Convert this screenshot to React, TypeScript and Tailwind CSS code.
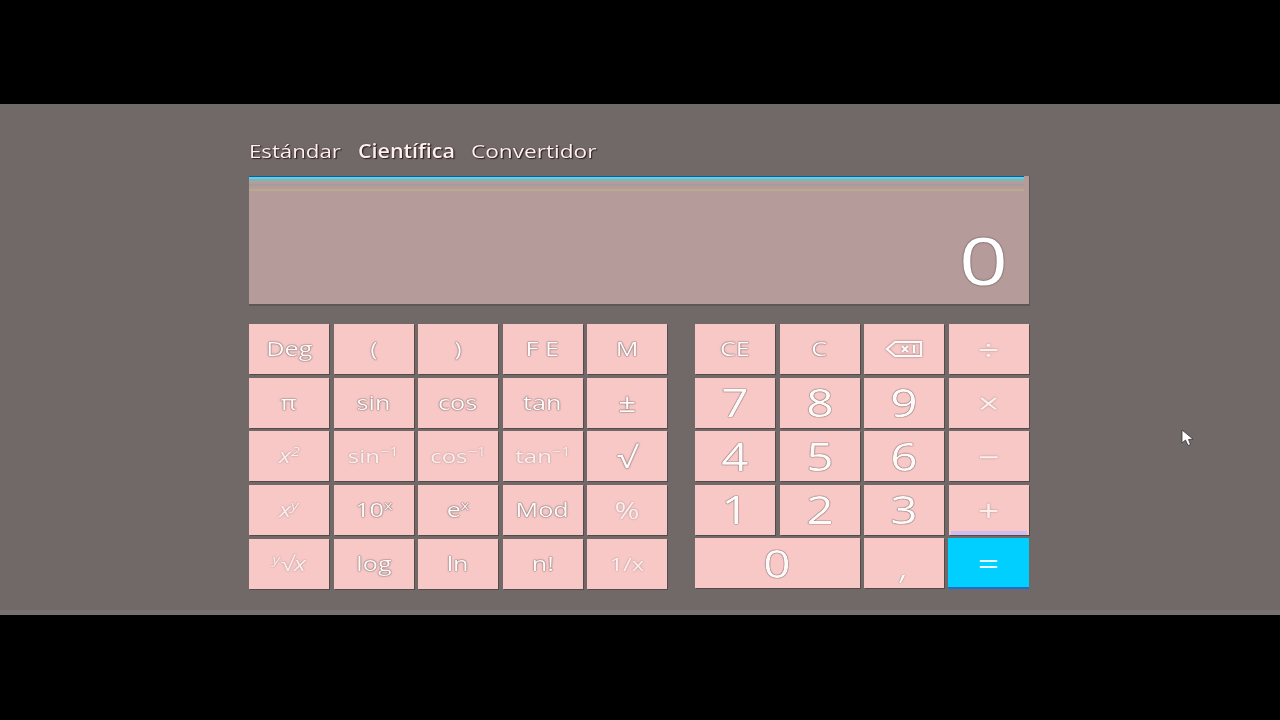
import React from "react";

const box =
  "flex items-center justify-center bg-[#f8c8c7] h-[50px] shadow-[1px_1px_0_#544a49] overflow-hidden";
const emboss = "text-[#fffaf8] font-medium [text-shadow:0_0_1px_#7a6464,0_0_1px_#7a6464,0_0_2px_#a08888]";
const faded = "text-[#fdeeec] font-medium [text-shadow:0_0_1px_#b89c9c,0_0_2px_#b89c9c]";
const digit = "text-[#fffaf8] text-[38px] font-medium [text-shadow:0_0_1px_#4f4040,0_0_1px_#4f4040]";

function Wide({ className, children }: { className?: string; children: React.ReactNode }) {
  return <span className={`inline-block scale-x-[1.26] whitespace-nowrap ${className ?? ""}`}>{children}</span>;
}

function Sup({ children }: { children: React.ReactNode }) {
  return <sup className="text-[13px] align-baseline relative -top-[7px]">{children}</sup>;
}

const left: { c: React.ReactNode; cls: string }[] = [
  { c: "Deg", cls: `${emboss} text-[20px]` },
  { c: "(", cls: `${emboss} text-[20px]` },
  { c: ")", cls: `${emboss} text-[20px]` },
  { c: "F E", cls: `${emboss} text-[20px]` },
  { c: "M", cls: `${emboss} text-[20px]` },
  { c: "π", cls: `${emboss} text-[20px]` },
  { c: "sin", cls: `${emboss} text-[20px]` },
  { c: "cos", cls: `${emboss} text-[20px]` },
  { c: "tan", cls: `${emboss} text-[20px]` },
  { c: "±", cls: `${emboss} text-[25px]` },
  { c: <span className="italic">x<Sup>2</Sup></span>, cls: `${faded} text-[20px]` },
  { c: <span>sin<Sup>−1</Sup></span>, cls: `${faded} text-[19px]` },
  { c: <span>cos<Sup>−1</Sup></span>, cls: `${faded} text-[19px]` },
  { c: <span>tan<Sup>−1</Sup></span>, cls: `${faded} text-[19px]` },
  { c: "√", cls: `${emboss} text-[30px]` },
  { c: <span className="italic">x<Sup>y</Sup></span>, cls: `${faded} text-[20px]` },
  { c: <span>10<Sup>x</Sup></span>, cls: `${emboss} text-[20px]` },
  { c: <span>e<Sup>x</Sup></span>, cls: `${emboss} text-[20px]` },
  { c: "Mod", cls: `${emboss} text-[20px]` },
  { c: "%", cls: `${faded} text-[24px]` },
  { c: <span className="italic"><Sup>y</Sup>√x</span>, cls: `${faded} text-[20px]` },
  { c: "log", cls: `${emboss} text-[20px]` },
  { c: "ln", cls: `${emboss} text-[20px]` },
  { c: "n!", cls: `${emboss} text-[20px]` },
  { c: "1/x", cls: `${faded} text-[19px]` },
];

function Backspace() {
  return (
    <svg width="38" height="18" viewBox="0 0 38 18" fill="none" stroke="#fffaf8" strokeWidth="2.2" style={{ filter: "drop-shadow(0 0 1px #8d7676)" }}>
      <path d="M10 2H36V16H10L2 9Z" />
      <path d="M17 6l6 6M23 6l-6 6M29 5v8" />
    </svg>
  );
}

export default function App() {
  return (
    <div className="flex flex-col w-[1280px] h-[720px] bg-black font-['Open_Sans','Noto_Sans',sans-serif] overflow-hidden">
      <div className="h-[104px] shrink-0 bg-black" />
      <div className="relative h-[511px] shrink-0 bg-[#716967] pl-[249px] pt-[35px] border-b-[5px] border-[#787170]">
        <div className="flex gap-[18px] h-[24px] items-center text-[19px] leading-[24px] text-[#fff0ee] [text-shadow:0_0_1px_#2f2222,1px_1px_1px_#2f2222]">
          <span className="block w-[91px] whitespace-nowrap origin-left scale-x-[1.17]">Estándar</span>
          <span className="block w-[95px] whitespace-nowrap origin-left scale-x-[1.13] font-semibold">Científica</span>
          <span className="block w-[125px] whitespace-nowrap origin-left scale-x-[1.19]">Convertidor</span>
        </div>
        <div className="mt-[13px] w-[781px] h-[130px] bg-[#b59c9b] border-b-2 border-r border-[#5f5755] flex flex-col justify-end items-end relative">
          <div className="absolute inset-x-0 top-0 flex flex-col pr-[5px]">
            <div className="h-[1px] bg-[#3a46a0]" />
            <div className="h-[2px] bg-[#33e5f2]" />
            <div className="h-[1px]" />
            <div className="h-[2px] bg-[#8fb0a6]" />
            <div className="h-[2px]" />
            <div className="h-[2px] bg-[#a89a9e]" />
            <div className="h-[3px]" />
            <div className="h-[2px] bg-[#b8ab8c]" />
          </div>
          <span className="inline-block scale-x-[1.3] text-[66px] leading-[88px] text-white pr-[23px] pb-[1px] [text-shadow:0_0_1.5px_#2f2525]">0</span>
        </div>
        <div className="mt-[18px] flex w-[780px] justify-between">
          <div className="grid grid-cols-[repeat(5,80px)] gap-x-[4.5px] gap-y-[3.5px] w-[419px]">
            {left.map((k, i) => (
              <div key={i} className={`${box} ${k.cls}`}><Wide>{k.c}</Wide></div>
            ))}
          </div>
          <div className="grid grid-cols-[repeat(4,80px)] gap-x-[4.67px] gap-y-[3.5px] w-[334px]">
            <div className={`${box} ${emboss} text-[20px]`}><Wide>CE</Wide></div>
            <div className={`${box} ${emboss} text-[20px]`}><Wide>C</Wide></div>
            <div className={box}><Backspace /></div>
            <div className={`${box} ${faded} text-[30px]`}><Wide>÷</Wide></div>
            <div className={`${box} ${digit}`}><Wide>7</Wide></div>
            <div className={`${box} ${digit}`}><Wide>8</Wide></div>
            <div className={`${box} ${digit}`}><Wide>9</Wide></div>
            <div className={`${box} ${faded} text-[30px]`}><Wide>×</Wide></div>
            <div className={`${box} ${digit}`}><Wide>4</Wide></div>
            <div className={`${box} ${digit}`}><Wide>5</Wide></div>
            <div className={`${box} ${digit}`}><Wide>6</Wide></div>
            <div className={`${box} ${faded} text-[30px]`}><Wide>−</Wide></div>
            <div className={`${box} ${digit}`}><Wide>1</Wide></div>
            <div className={`${box} ${digit}`}><Wide>2</Wide></div>
            <div className={`${box} ${digit}`}><Wide>3</Wide></div>
            <div className={`${box} ${faded} text-[30px] relative`}>
              <Wide>+</Wide>
              <div className="absolute left-[2px] right-[2px] bottom-0 h-[4px] bg-[#cdbcf0]" />
            </div>
            <div className={`${box} ${digit} col-span-2`}><Wide>0</Wide></div>
            <div className={`${box} text-[#fffaf8] font-medium [text-shadow:0_0_1px_#4f4040] items-end pb-[4px]`}><span className="text-[32px] leading-[34px] italic">,</span></div>
            <div className="flex items-center justify-center h-[51px] w-[81px] -ml-[0.5px] bg-[#00cfff] text-[#e9f6f6] text-[30px] border-b-2 border-[#1a6fd0]"><Wide>=</Wide></div>
          </div>
        </div>
        <svg className="absolute left-[1181px] top-[325px]" width="14" height="18" viewBox="0 0 14 18">
          <path d="M1 1L1 14L4.5 11L7 16.5L9.5 15.5L7.5 10.5L12 10Z" fill="#fff" stroke="#333" strokeWidth="0.8" />
        </svg>
      </div>
      <div className="flex-1 bg-black" />
    </div>
  );
}
